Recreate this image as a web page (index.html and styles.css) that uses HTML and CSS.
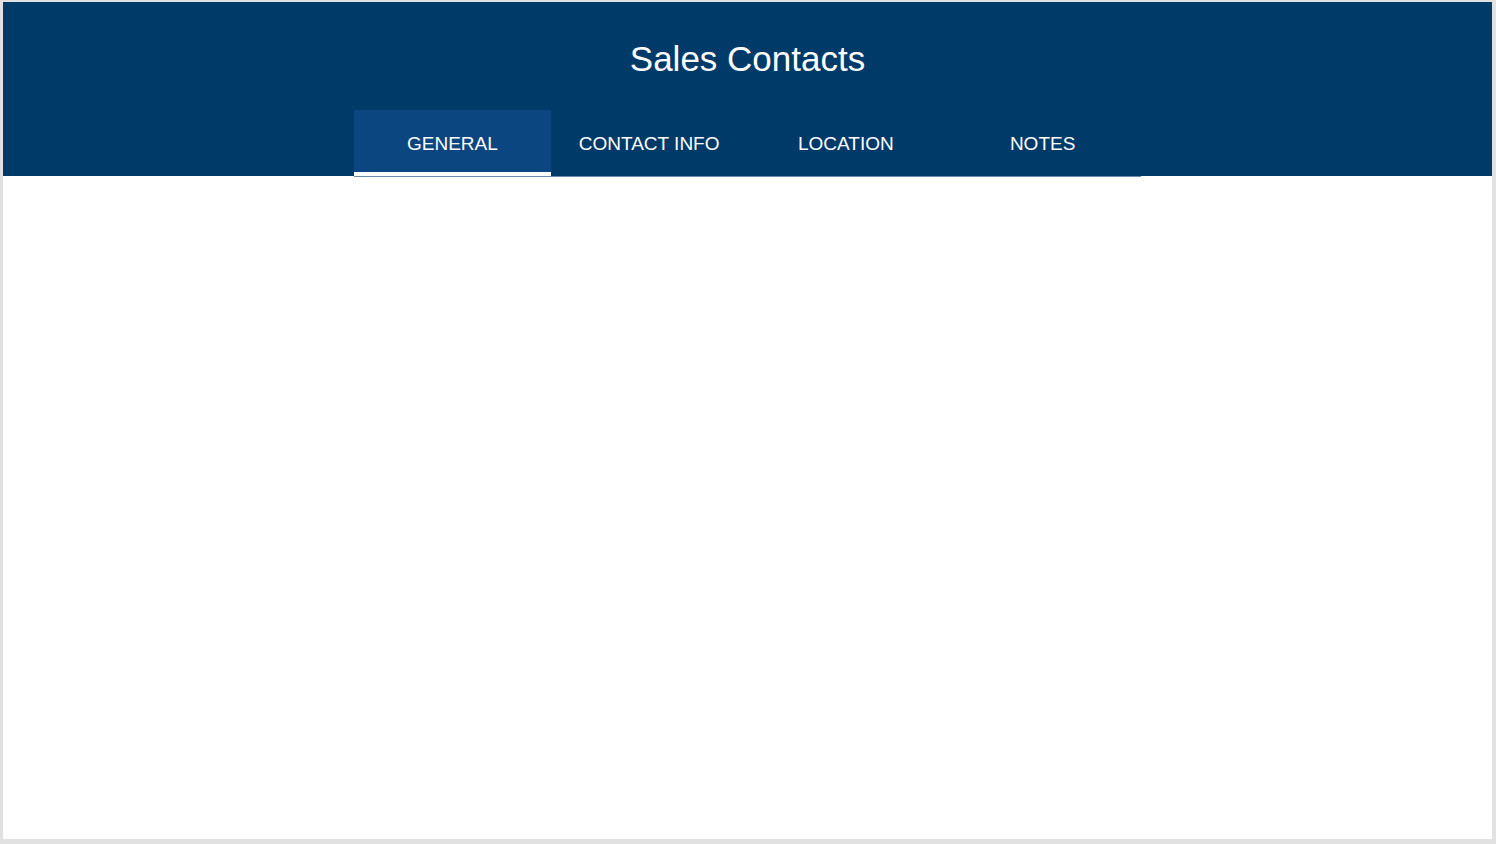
FILE: index.html
```html
<!DOCTYPE html>
<html lang="en">
<head>
    <meta charset="UTF-8">
    <meta name="viewport" content="width=device-width, initial-scale=1.0">
    <title>Sales Contacts</title>
    <link rel="stylesheet" href="styles.css">
</head>
<body>
    <div class="frame">
        <div class="header">
            <h1 class="title">Sales Contacts</h1>
            <div class="tabs">
                <div class="tab active">GENERAL</div>
                <div class="tab">CONTACT INFO</div>
                <div class="tab">LOCATION</div>
                <div class="tab">NOTES</div>
            </div>
        </div>
        <div class="content"></div>
    </div>
</body>
</html>
```

FILE: styles.css
```css
html, body {
    height: 100%;
}

body {
    margin: 0;
    background: #e1e1e1;
    font-family: "Liberation Sans", Arial, sans-serif;
    color: #fff;
    overflow: hidden;
}

.frame {
    box-sizing: border-box;
    height: 100%;
    padding: 2px 4px 5px 3px;
    display: flex;
    flex-direction: column;
}

.header {
    background: #003a69;
    display: flex;
    flex-direction: column;
    align-items: center;
    flex-shrink: 0;
}

.title {
    margin: 0;
    padding-top: 36px;
    height: 108px;
    box-sizing: border-box;
    font-size: 35px;
    font-weight: normal;
    line-height: 42px;
    flex-shrink: 0;
}

.tabs {
    display: flex;
    width: 787px;
    height: 66px;
    border-bottom: 1px solid #6a8bb0;
    margin-bottom: -1px;
    position: relative;
    z-index: 1;
}

.tab {
    flex: 1;
    display: flex;
    align-items: center;
    justify-content: center;
    font-size: 19px;
    padding-top: 1px;
    box-sizing: border-box;
}

.tab.active {
    background: #0c4680;
    border-bottom: 4px solid #fff;
    padding-top: 5px;
}

.content {
    flex: 1;
    background: #fff;
}
```
